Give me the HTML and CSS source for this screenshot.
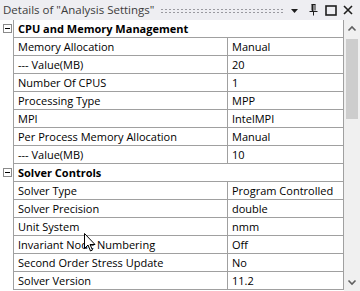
FILE: index.html
```html
<!DOCTYPE html>
<html>
<head>
<meta charset="utf-8">
<link rel="stylesheet" href="styles.css">
</head>
<body>
<div class="panel">
  <div class="titlebar">
    <span class="title">Details of "Analysis Settings"</span>
    <span class="grip"></span>
    <span class="tb-icons">
      <svg width="9" height="5" viewBox="0 0 9 5" class="ic-drop"><path d="M1 0h7l-3.5 4z" fill="#1e1e1e"/></svg>
      <svg width="9" height="12" viewBox="0 0 9 12" class="ic-pin"><path d="M2.5 0.5h4M3 0.5v6M6 0.5v6M0.5 7.5h8M4.5 7.5v4" stroke="#1e1e1e" stroke-width="1" fill="none"/><rect x="3" y="1" width="1.5" height="6" fill="#1e1e1e"/></svg>
      <svg width="12" height="11" viewBox="0 0 12 11" class="ic-max"><rect x="1" y="1" width="10" height="9" fill="none" stroke="#1e1e1e" stroke-width="1.6"/></svg>
      <svg width="10" height="10" viewBox="0 0 10 10" class="ic-close"><path d="M1 1l8 8M9 1l-8 8" stroke="#1e1e1e" stroke-width="1.6"/></svg>
    </span>
  </div>
  <div class="body">
    <div class="grid">
      <div class="row hdr"><div class="gut"><span class="minus"></span></div><div class="cell span">CPU and Memory Management</div></div>
      <div class="row"><div class="gut"></div><div class="cell name">Memory Allocation</div><div class="cell val">Manual</div></div>
      <div class="row"><div class="gut"></div><div class="cell name">--- Value(MB)</div><div class="cell val">20</div></div>
      <div class="row"><div class="gut"></div><div class="cell name">Number Of CPUS</div><div class="cell val">1</div></div>
      <div class="row"><div class="gut"></div><div class="cell name">Processing Type</div><div class="cell val">MPP</div></div>
      <div class="row"><div class="gut"></div><div class="cell name">MPI</div><div class="cell val">IntelMPI</div></div>
      <div class="row"><div class="gut"></div><div class="cell name">Per Process Memory Allocation</div><div class="cell val">Manual</div></div>
      <div class="row"><div class="gut"></div><div class="cell name">--- Value(MB)</div><div class="cell val">10</div></div>
      <div class="row hdr"><div class="gut"><span class="minus"></span></div><div class="cell span">Solver Controls</div></div>
      <div class="row"><div class="gut"></div><div class="cell name">Solver Type</div><div class="cell val">Program Controlled</div></div>
      <div class="row"><div class="gut"></div><div class="cell name">Solver Precision</div><div class="cell val">double</div></div>
      <div class="row"><div class="gut"></div><div class="cell name">Unit System</div><div class="cell val">nmm</div></div>
      <div class="row"><div class="gut"></div><div class="cell name">Invariant Node Numbering</div><div class="cell val">Off</div></div>
      <div class="row"><div class="gut"></div><div class="cell name">Second Order Stress Update</div><div class="cell val">No</div></div>
      <div class="row"><div class="gut"></div><div class="cell name">Solver Version</div><div class="cell val">11.2</div></div>
    </div>
    <div class="scrollbar">
      <svg class="arrow" width="16" height="17" viewBox="0 0 16 17"><path d="M4.5 10.5l3.5-3.5 3.5 3.5" stroke="#606060" stroke-width="1.6" fill="none"/></svg>
      <div class="track"><div class="thumb"></div></div>
      <svg class="arrow" width="16" height="17" viewBox="0 0 16 17"><path d="M4.5 6.5l3.5 3.5 3.5-3.5" stroke="#606060" stroke-width="1.6" fill="none"/></svg>
    </div>
  </div>
  <svg class="cursor" width="14" height="20" viewBox="0 0 14 20"><path d="M0.5 0.5v15l3.5-3.5 2.5 6 2-1-2.5-5.5h5z" fill="#fff" stroke="#000" stroke-width="1"/></svg>
</div>
</body>
</html>
```
FILE: styles.css
```css
* { box-sizing: border-box; }
html, body { margin: 0; padding: 0; background: #fff; }
body { font-family: "Open Sans", "Noto Sans", sans-serif; font-size: 11px; color: #000; }
.panel { position: relative; width: 360px; height: 291px; overflow: hidden; }
.titlebar { height: 20px; background: #eeeef2; display: flex; align-items: center; padding-left: 3px; }
.title { color: #3c3c3c; font-size: 11.5px; white-space: nowrap; line-height: 20px; }
.grip { flex: 1; height: 5px; margin: 0 6px 0 6px; background-image: radial-gradient(circle, #9a9aa0 0.6px, transparent 0.8px); background-size: 4px 3px; }
.tb-icons { display: flex; align-items: center; padding-right: 7px; }
.ic-drop { margin-right: 10px; margin-top: 2px; }
.ic-pin { margin-right: 7px; }
.ic-max { margin-right: 6px; }
.body { display: flex; height: 271px; }
.grid { width: 344px; }
.row { display: flex; height: 18px; }
.gut { width: 14px; border-right: 1px solid #a0a0a0; position: relative; }
.cell { border-bottom: 1px solid #a0a0a0; border-right: 1px solid #a0a0a0; padding-left: 4px; line-height: 17px; white-space: nowrap; overflow: hidden; }
.name { width: 214px; }
.val { width: 116px; }
.span { width: 330px; font-weight: 700; }
.minus { position: absolute; left: 3px; top: 4px; width: 9px; height: 9px; border: 1px solid #8a8a8a; background: #fff; }
.minus::after { content: ""; position: absolute; left: 1px; top: 3px; width: 5px; height: 1px; background: #000; }
.scrollbar { width: 16px; background: #f0f0f0; display: flex; flex-direction: column; }
.arrow { display: block; }
.track { flex: 1; position: relative; }
.thumb { position: absolute; left: 2px; right: 2px; top: 2px; height: 80px; background: #cdcdcd; }
.cursor { position: absolute; left: 84px; top: 233px; }
```
